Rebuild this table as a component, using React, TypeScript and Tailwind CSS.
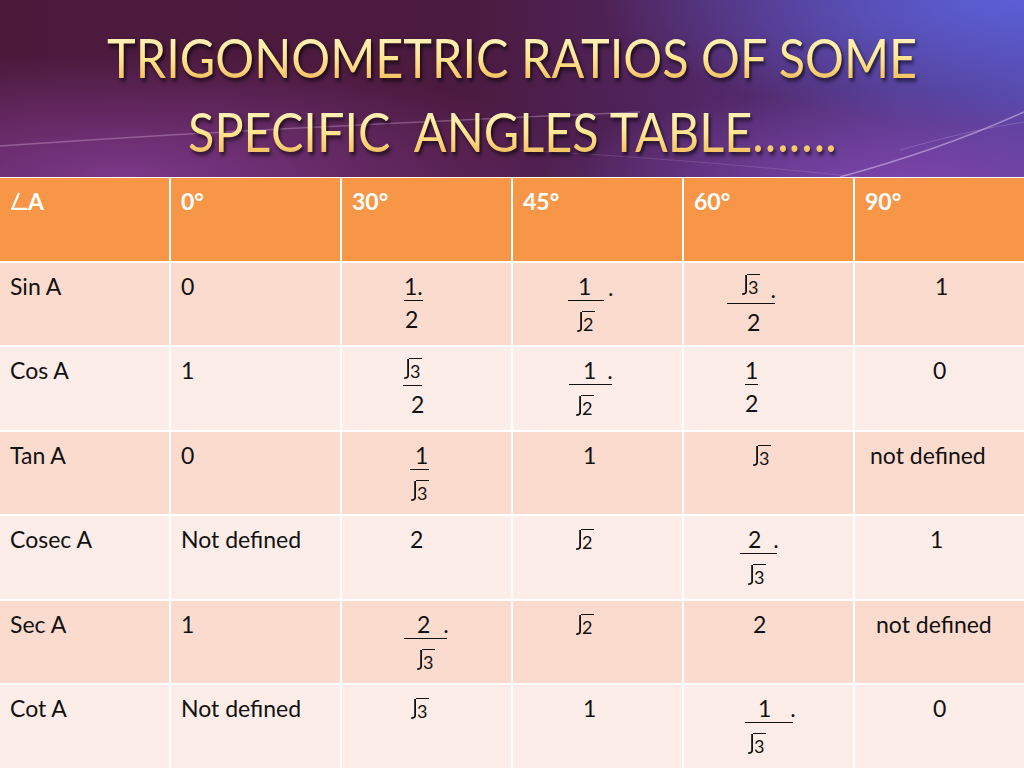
import type { ReactNode } from "react";

// square root drawn like the slide's symbol-font glyph: hook + overbar + small digit
function Sqrt({ n }: { n: string }) {
  return (
    <span className="inline-flex h-[21px] items-stretch">
      <svg width="6" height="21" viewBox="0 0 6 21" className="shrink-0">
        <path d="M5.1 0.9 V17.6 Q5.1 20.1 1.2 20.1" fill="none" stroke="#111" strokeWidth="1.8" />
      </svg>
      <span className="flex items-end border-t-[1.8px] border-[#111] pl-[1px] pr-[2px] text-[18px] leading-[16px]">
        {n}
      </span>
    </span>
  );
}

function Frac({
  num,
  den,
  numCls = "",
  denCls = "",
  tail,
}: {
  num: ReactNode;
  den: ReactNode;
  numCls?: string;
  denCls?: string;
  tail?: string;
}) {
  return (
    <div className="inline-flex flex-col items-start">
      <div className="flex items-end">
        <div className={`flex h-[28px] items-end border-b-[1.5px] border-[#111] leading-[28px] ${numCls}`}>
          {num}
        </div>
        {tail && <span className="ml-[4px] leading-[28px]">{tail}</span>}
      </div>
      <div className={denCls}>{den}</div>
    </div>
  );
}

function Cell({ pl, children }: { pl: string; children: ReactNode }) {
  return <div className={`pt-[9px] leading-[28px] ${pl}`}>{children}</div>;
}

function Root({ n }: { n: string }) {
  return (
    <div className="flex h-[25px] items-end">
      <Sqrt n={n} />
    </div>
  );
}

const denTxt = "pt-[4px] leading-[28px]";
const denSq = "flex pt-[10px]";

const rows: { bg: string; cells: ReactNode[] }[] = [
  {
    bg: "bg-[#fcdbcf]",
    cells: [
      <Cell pl="pl-[10px]">Sin A</Cell>,
      <Cell pl="pl-[10px]">0</Cell>,
      <Cell pl="pl-[62px]">
        <Frac num="1." den="2" denCls={`${denTxt} pl-[1px]`} />
      </Cell>,
      <Cell pl="pl-[55px]">
        <Frac num="1" numCls="w-[36px] pl-[10px]" tail="." den={<Sqrt n="2" />} denCls={`${denSq} pl-[8px]`} />
      </Cell>,
      <Cell pl="pl-[43px]">
        <Frac
          num={
            <>
              <span className="mb-[3px]">
                <Sqrt n="3" />
              </span>
              <span className="ml-[10px]">.</span>
            </>
          }
          numCls="w-[48px] pl-[14px]"
          den="2"
          denCls={`${denTxt} pl-[20px]`}
        />
      </Cell>,
      <Cell pl="pl-[80px]">1</Cell>,
    ],
  },
  {
    bg: "bg-[#fdede8]",
    cells: [
      <Cell pl="pl-[10px]">Cos A</Cell>,
      <Cell pl="pl-[10px]">1</Cell>,
      <Cell pl="pl-[61px]">
        <Frac
          num={
            <span className="mb-[1px]">
              <Sqrt n="3" />
            </span>
          }
          den="2"
          denCls={`${denTxt} pl-[8px]`}
        />
      </Cell>,
      <Cell pl="pl-[56px]">
        <Frac
          num={
            <>
              1<span className="ml-[11px]">.</span>
            </>
          }
          numCls="w-[43px] pl-[14px]"
          den={<Sqrt n="2" />}
          denCls={`${denSq} pl-[6px]`}
        />
      </Cell>,
      <Cell pl="pl-[61px]">
        <Frac num="1" den="2" denCls={denTxt} />
      </Cell>,
      <Cell pl="pl-[78px]">0</Cell>,
    ],
  },
  {
    bg: "bg-[#fcdbcf]",
    cells: [
      <Cell pl="pl-[10px]">Tan A</Cell>,
      <Cell pl="pl-[10px]">0</Cell>,
      <Cell pl="pl-[68px]">
        <Frac num="1" numCls="w-[19px] pl-[5px]" den={<Sqrt n="3" />} denCls={denSq} />
      </Cell>,
      <Cell pl="pl-[70px]">1</Cell>,
      <Cell pl="pl-[68px]">
        <Root n="3" />
      </Cell>,
      <Cell pl="pl-[15px]">not defined</Cell>,
    ],
  },
  {
    bg: "bg-[#fdede8]",
    cells: [
      <Cell pl="pl-[10px]">Cosec A</Cell>,
      <Cell pl="pl-[10px]">Not defined</Cell>,
      <Cell pl="pl-[68px]">2</Cell>,
      <Cell pl="pl-[62px]">
        <Root n="2" />
      </Cell>,
      <Cell pl="pl-[56px]">
        <Frac
          num={
            <>
              2<span className="ml-[12px]">.</span>
            </>
          }
          numCls="w-[37px] pl-[8px]"
          den={<Sqrt n="3" />}
          denCls={`${denSq} pl-[7px]`}
        />
      </Cell>,
      <Cell pl="pl-[75px]">1</Cell>,
    ],
  },
  {
    bg: "bg-[#fcdbcf]",
    cells: [
      <Cell pl="pl-[10px]">Sec A</Cell>,
      <Cell pl="pl-[10px]">1</Cell>,
      <Cell pl="pl-[62px]">
        <Frac
          num={
            <>
              2<span className="ml-[13px]">.</span>
            </>
          }
          numCls="w-[43px] pl-[13px]"
          den={<Sqrt n="3" />}
          denCls={`${denSq} pl-[12px]`}
        />
      </Cell>,
      <Cell pl="pl-[62px]">
        <Root n="2" />
      </Cell>,
      <Cell pl="pl-[69px]">2</Cell>,
      <Cell pl="pl-[21px]">not defined</Cell>,
    ],
  },
  {
    bg: "bg-[#fdede8]",
    cells: [
      <Cell pl="pl-[10px]">Cot A</Cell>,
      <Cell pl="pl-[10px]">Not defined</Cell>,
      <Cell pl="pl-[68px]">
        <Root n="3" />
      </Cell>,
      <Cell pl="pl-[70px]">1</Cell>,
      <Cell pl="pl-[61px]">
        <Frac
          num={
            <>
              1<span className="ml-[19px]">.</span>
            </>
          }
          numCls="w-[48px] pl-[13px]"
          den={<Sqrt n="3" />}
          denCls={`${denSq} pl-[2px]`}
        />
      </Cell>,
      <Cell pl="pl-[78px]">0</Cell>,
    ],
  },
];

const heads = ["0°", "30°", "45°", "60°", "90°"];

export default function App() {
  return (
    <div className="flex h-[768px] w-[1024px] flex-col overflow-hidden bg-white font-['Lato',sans-serif]">
      {/* title band */}
      <div className="relative h-[177px] shrink-0 bg-[radial-gradient(ellipse_55%_95%_at_100%_0%,#5b5fd6_0%,rgba(91,95,214,0)_75%),radial-gradient(ellipse_45%_70%_at_12%_100%,#7c3889_0%,rgba(124,56,137,0)_100%),radial-gradient(ellipse_35%_50%_at_88%_100%,#7a44a8_0%,rgba(122,68,168,0)_100%),linear-gradient(90deg,#4b1a3b_0%,#4b1a3f_45%,#52296a_72%,#5644a0_100%)]">
        <svg className="absolute inset-0" width="1024" height="177" viewBox="0 0 1024 177" fill="none">
          <path d="M0 146 Q260 128 640 112" stroke="rgba(255,220,255,0.28)" strokeWidth="1.5" />
          <path d="M840 177 Q940 150 1024 112" stroke="rgba(240,220,255,0.45)" strokeWidth="1.5" />
          <path d="M900 150 Q970 130 1024 122" stroke="rgba(240,220,255,0.2)" strokeWidth="1" />
          <path d="M520 150 Q700 160 860 177" stroke="rgba(255,220,255,0.15)" strokeWidth="1" />
        </svg>
        <div className="relative flex flex-col items-center pt-[21px] text-[54px] leading-[74px]">
          <div className="scale-x-[0.9] whitespace-pre bg-linear-to-b from-[#fffbd6] via-[#ffe690] to-[#eaa63a] bg-clip-text text-transparent drop-shadow-[2px_3px_2px_rgba(0,0,0,0.65)]">
            TRIGONOMETRIC RATIOS OF SOME
          </div>
          <div className="scale-x-[0.9] whitespace-pre bg-linear-to-b from-[#fffbd6] via-[#ffe690] to-[#eaa63a] bg-clip-text text-transparent drop-shadow-[2px_3px_2px_rgba(0,0,0,0.65)]">
            {"SPECIFIC  ANGLES TABLE……."}
          </div>
        </div>
      </div>

      {/* table */}
      <div className="grid flex-1 grid-cols-6 grid-rows-7 gap-[2px] bg-white pt-[1px] text-[23px] text-[#111]">
        <div className="bg-[#f79646] pl-[11px] pt-[9px] font-bold leading-[28px] text-white">
          <svg className="inline-block align-baseline" width="17" height="18" viewBox="0 0 17 18" fill="none">
            <path d="M8 1 L1.3 16.8 H16.5" stroke="#fff" strokeWidth="2.2" />
          </svg>
          A
        </div>
        {heads.map((h) => (
          <div key={h} className="bg-[#f79646] pl-[10px] pt-[9px] font-bold leading-[28px] text-white">
            {h}
          </div>
        ))}
        {rows.map((r, i) =>
          r.cells.map((c, j) => (
            <div key={`${i}-${j}`} className={r.bg}>
              {c}
            </div>
          ))
        )}
      </div>
    </div>
  );
}
